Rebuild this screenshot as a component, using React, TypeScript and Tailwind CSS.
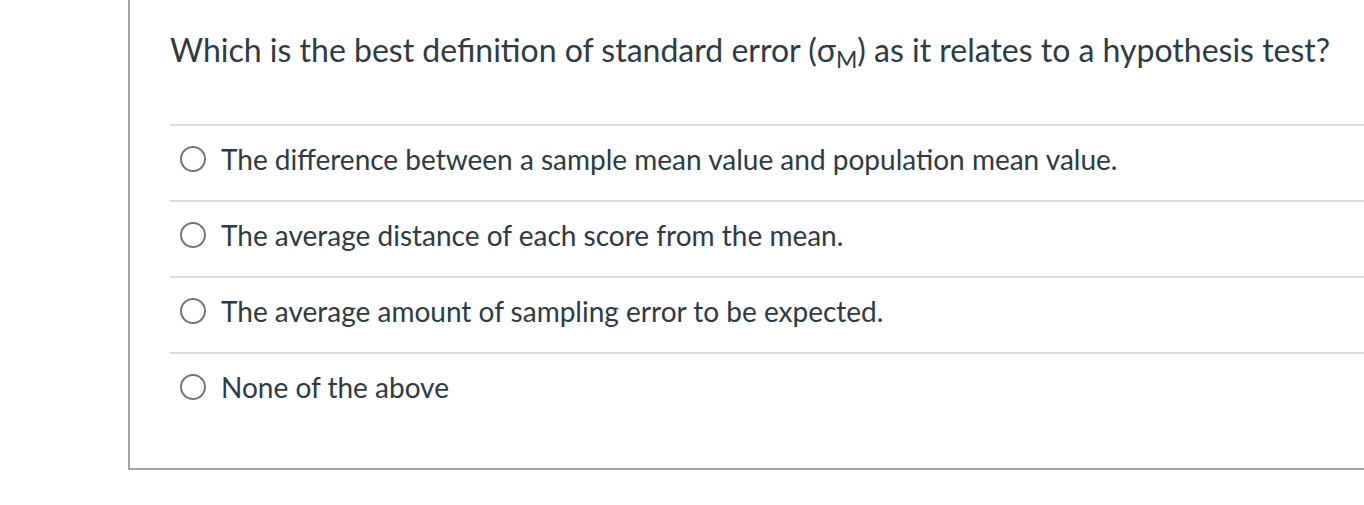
const answers = [
  "The difference between a sample mean value and population mean value.",
  "The average distance of each score from the mean.",
  "The average amount of sampling error to be expected.",
  "None of the above",
];

export default function App() {
  return (
    <div className="h-[505px] w-[1364px] overflow-hidden bg-white font-['Lato','Liberation_Sans',sans-serif] text-[#2d3b45]">
      <div className="ml-[128px] w-[1300px] border-b-2 border-l-2 border-[#a5a5a5] pb-[40px] pl-[40px]">
        <div className="pt-[30px] pb-[54px] text-[32px] leading-[40px]">
          Which is the best definition of standard error (σ
          <sub className="text-[23px]">M</sub>) as it relates to a hypothesis test?
        </div>
        <div>
          {answers.map((a) => (
            <div
              key={a}
              className="flex h-[76px] items-start border-t-2 border-[#dcdcdc] pt-[12px] pl-[10px]"
            >
              <div className="flex h-[42px] items-center">
                <span className="h-[26px] w-[26px] shrink-0 rounded-full border-2 border-[#777]" />
                <span className="ml-[15px] text-[28px] leading-[42px]">{a}</span>
              </div>
            </div>
          ))}
        </div>
      </div>
    </div>
  );
}
